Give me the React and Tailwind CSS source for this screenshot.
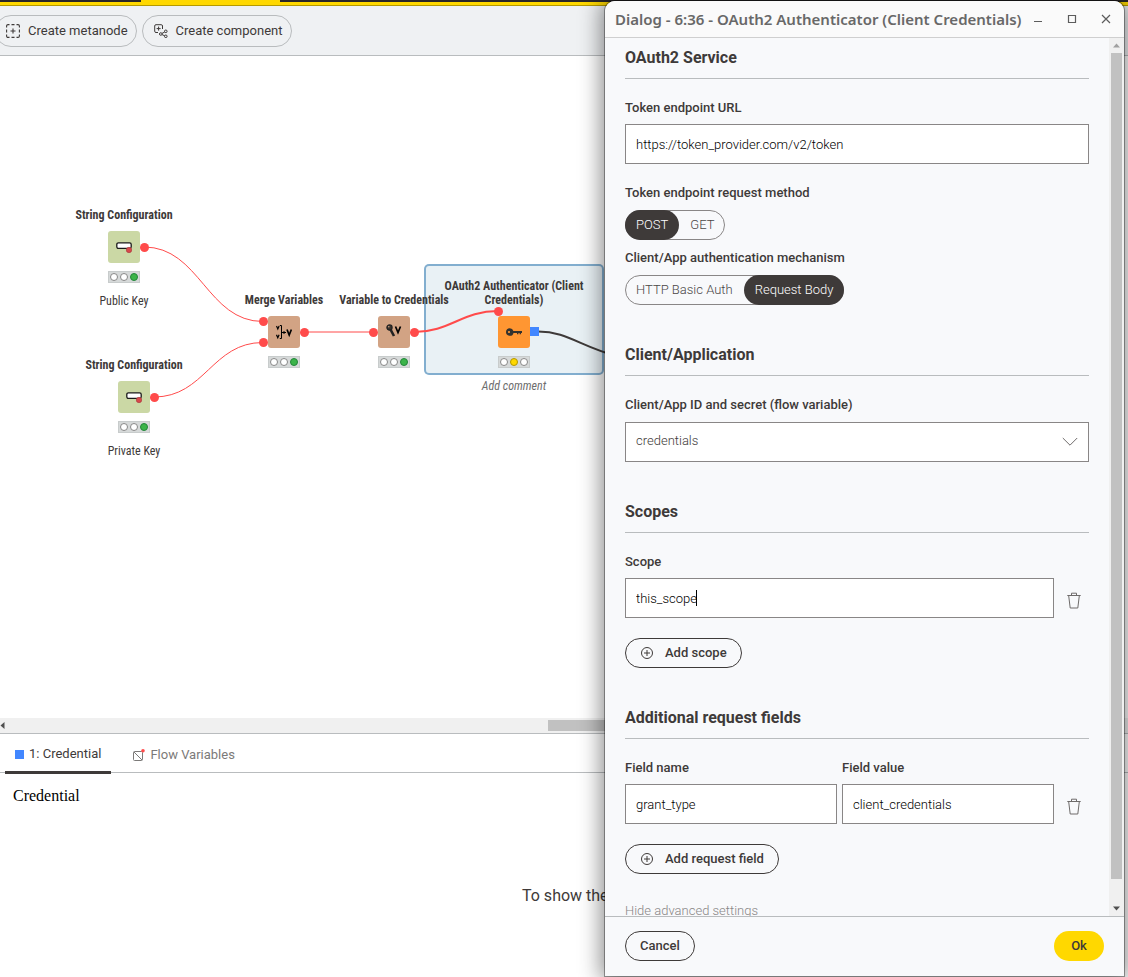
import { useState } from "react";

const NODES = [
  { id: "public", title: "String Configuration", comment: "Public Key", color: "bg-[#cbd8a5]", icon: "config", light: 2, pos: "left-[64px] top-[152px]" },
  { id: "private", title: "String Configuration", comment: "Private Key", color: "bg-[#cbd8a5]", icon: "config", light: 2, pos: "left-[74px] top-[302px]" },
  { id: "merge", title: "Merge Variables", color: "bg-[#d2a384]", icon: "merge", light: 2, pos: "left-[224px] top-[237px]" },
  { id: "tocred", title: "Variable to Credentials", color: "bg-[#d2a384]", icon: "credentials", light: 2, pos: "left-[334px] top-[237px]" },
  { id: "oauth", title: "OAuth2 Authenticator (Client Credentials)", comment: "Add comment", placeholder: true, wide: true, color: "bg-[#ff9632]", icon: "key", light: 1, pos: "left-[439px] top-[223px]" },
];

const FLOW_PORTS = [
  [144, 191], [154, 341], [263, 265], [263, 286], [304, 276], [373, 276], [414, 276], [498, 255],
];

function NodeIcon({ name }) {
  if (name === "config") {
    return (
      <svg width="16" height="16" viewBox="0 0 16 16">
        <rect x="0.8" y="3.8" width="14.4" height="5.6" rx="1.6" fill="#fff" stroke="#1a1a1a" strokeWidth="1.3" />
        <circle cx="13" cy="11" r="2.7" fill="#d8474b" stroke="#a5383b" strokeWidth="0.6" />
      </svg>
    );
  }
  if (name === "merge") {
    return (
      <svg width="16" height="16" viewBox="0 0 16 16" fill="none" stroke="#000">
        <path d="M0.5 2 1.8 5 3.1 2M0.5 10.8 1.8 13.8 3.1 10.8" strokeWidth="1.2" />
        <path d="M3.8 1.5h1.7v13H3.8" strokeWidth="1" />
        <path d="M6 8.5h4M8 7v3" strokeWidth="1" />
        <path d="M11 5.500 13.200 11 15.400 5.500" strokeWidth="1.700" />
      </svg>
    );
  }
  if (name === "credentials") {
    return (
      <svg width="16" height="16" viewBox="0 0 16 16" fill="none" stroke="#222">
        <circle cx="3.5" cy="3.5" r="2.6" fill="#3b332d" strokeWidth="1.2" />
        <circle cx="2.8" cy="2.8" r="0.8" fill="#d2a384" stroke="none" />
        <path d="M4.5 5.5 8 12" strokeWidth="2.6" />
        <path d="M9.500 2.500 12 8.500 14.500 2.500" stroke="#000" strokeWidth="1.700" />
      </svg>
    );
  }
  return (
    <svg width="16" height="16" viewBox="0 0 16 16" fill="#33312e">
      <path fillRule="evenodd" d="M3.8 4.2a3.8 3.8 0 0 1 3.6 2.7H16v2h-1v1.4h-1.4V8.900h-1.200v1.400H11V8.900H7.500A3.800 3.800 0 1 1 3.800 4.200ZM3 6.900a1.100 1.100 0 1 0 0 2.200 1.100 1.100 0 0 0 0-2.200Z" />
    </svg>
  );
}

function TrafficLight({ active }) {
  const on = active === 2 ? "border-[#23853a] bg-[#3cb44a]" : "border-[#b39700] bg-[#ffd800]";
  return (
    <div className="flex h-3 w-8 items-center justify-center gap-0.5 border border-[#c8cccc] bg-[#d6d9d9]">
      {[0, 1, 2].map((i) => (
        <span key={i} className={`size-2 rounded-full border ${i === active ? on : "border-[#888] bg-white"}`} />
      ))}
    </div>
  );
}

function WorkflowNode({ node }) {
  return (
    <div className={`absolute flex flex-col items-center ${node.wide ? "w-[150px]" : "w-[120px]"} ${node.pos}`}>
      <div className={`text-center text-[12px] leading-[14px] font-bold ${node.wide ? "" : "whitespace-nowrap"}`}>{node.title}</div>
      <div className={`mt-[9px] flex size-8 items-center justify-center rounded-[3px] ${node.color}`}>
        <NodeIcon name={node.icon} />
      </div>
      <div className="mt-2">
        <TrafficLight active={node.light} />
      </div>
      {node.comment && (
        <div className={`mt-[10px] text-[12px] leading-[16px] ${node.placeholder ? "text-[#6e6e6e] italic" : ""}`}>{node.comment}</div>
      )}
    </div>
  );
}

function Canvas() {
  return (
    <main className="relative min-h-[400px] flex-1 overflow-hidden bg-white font-['Roboto_Condensed','Roboto',sans-serif]">
      <div className="absolute top-[208px] left-[424px] h-[111px] w-[180px] rounded-[5px] border-2 border-[#3e82b5]/60 bg-[#e9f1f5]" />
      <svg className="absolute top-0 left-0" width="640" height="420" fill="none">
        <g stroke="#ff4b4b" strokeWidth="1">
          <path d="M144 191C200 191 207 265.500 263 265.500" />
          <path d="M154 341C205 341 212 286.500 263 286.500" />
          <path d="M304 276H373" />
          <path d="M414 276C450 276 462 255 498 255" strokeWidth="2" />
        </g>
        <path d="M538 275.500C568 275.500 580 291 620 301" stroke="#3e3a39" strokeWidth="2" />
        {FLOW_PORTS.map(([x, y]) => (
          <circle key={`${x}-${y}`} cx={x + 0.5} cy={y + 0.5} r="4.500" fill="#ff4b4b" />
        ))}
        <rect x="530" y="271" width="9" height="9" fill="#4287ff" />
      </svg>
      {NODES.map((node) => (
        <WorkflowNode key={node.id} node={node} />
      ))}
    </main>
  );
}

function Toolbar() {
  return (
    <header className="flex h-[50px] shrink-0 items-center gap-[5px] border-b border-[#b9bcbe] bg-[#eff1f3]">
      <button className="-ml-[5px] flex h-8 items-center gap-2 rounded-full border border-[#b9bcbe] pr-2 pl-[10px] text-[13px]">
        <svg width="14" height="14" viewBox="0 0 14 14" fill="none" stroke="#3e3a39" strokeWidth="1.100">
          <path d="M0.600 3.500V2a1.400 1.400 0 0 1 1.400-1.400h1.500M10.500.6H12A1.400 1.400 0 0 1 13.400 2v1.500M13.400 10.500V12a1.400 1.400 0 0 1-1.400 1.400h-1.500M3.500 13.400H2A1.400 1.400 0 0 1 .6 12v-1.500M5.500.6h3M5.500 13.400h3M.6 5.500v3M13.400 5.500v3M7 4.500v5M4.500 7h5" />
        </svg>
        Create metanode
      </button>
      <button className="flex h-8 items-center gap-2 rounded-full border border-[#b9bcbe] pr-[9px] pl-[11px] text-[13px]">
        <svg width="14" height="14" viewBox="0 0 14 14" fill="none" stroke="#3e3a39" strokeWidth="1">
          <path d="M4 8.500H2A1.300 1.300 0 0 1 .7 7.200V2A1.300 1.300 0 0 1 2 .7h5.200A1.300 1.300 0 0 1 8.500 2v3M4.600 2.600v4M2.600 4.600h4" />
          <circle cx="6.800" cy="10" r="1.300" />
          <circle cx="11.800" cy="7.300" r="1.300" />
          <circle cx="11.800" cy="12.300" r="1.300" />
          <path d="M8 9.400 10.700 8M8 10.600 10.700 11.800" />
        </svg>
        Create component
      </button>
    </header>
  );
}

function OutputPanel() {
  return (
    <section className="h-[243px] shrink-0 bg-white">
      <div className="flex h-[39px] border-b border-[#b9bcbe] pl-[5px] text-[13px]">
        <button className="flex h-10 items-center gap-[5px] border-b-3 border-[#3e3a39] px-[10px] pt-[3px]">
          <span className="size-[9px] bg-[#4287ff]" />
          1: Credential
        </button>
        <button className="ml-3 flex h-10 items-center gap-[5px] px-[10px] pt-0.5 text-[#7c7a79]">
          <svg width="12" height="12" viewBox="0 0 12 12" fill="none" stroke="#7c7a79">
            <rect x="0.500" y="2.500" width="9" height="9" rx="1" />
            <path d="M1 3 9 11" />
            <circle cx="10" cy="1.800" r="1.800" fill="#ff4b4b" stroke="none" />
          </svg>
          Flow Variables
        </button>
      </div>
      <p className="mt-[13px] ml-[13px] font-['Liberation_Serif',serif] text-[16px] leading-5 text-black">Credential</p>
      <p className="mt-20 ml-[522px] text-[16px] leading-5 whitespace-nowrap">To show the node output, please execute the node.</p>
    </section>
  );
}

function SectionTitle({ children }) {
  return <h2 className="mb-[18px] border-b border-[#b9bcbe] pb-[9px] text-[16px] leading-[22px] font-bold">{children}</h2>;
}

function TextField({ id, label, value, caret }) {
  return (
    <div className="min-w-0 flex-1">
      <label htmlFor={id} className="mb-[5px] block leading-[22px] font-medium">{label}</label>
      <div className="relative">
        <input id={id} defaultValue={value} className="h-10 w-full border border-[#898686] bg-white px-[10px] font-light text-black outline-none" />
        {caret && <span className="absolute top-3 left-[71px] h-4 w-px bg-black" />}
      </div>
    </div>
  );
}

function ValueSwitch({ name, label, options, initial }) {
  const [selected, setSelected] = useState(initial);
  return (
    <fieldset>
      <legend className="mb-[6px] block leading-[22px] font-medium">{label}</legend>
      <div className="flex h-[30px] w-fit rounded-full border border-[#898686]">
        {options.map((option) => (
          <label
            key={option}
            className={`-my-px flex items-center rounded-full px-[11px] font-light first:-ml-px last:-mr-px ${
              selected === option ? "bg-[#3e3a39] text-white" : "text-[#4a4746]"
            }`}
          >
            <input type="radio" name={name} className="sr-only" checked={selected === option} onChange={() => setSelected(option)} />
            {option}
          </label>
        ))}
      </div>
    </fieldset>
  );
}

function TrashButton({ label }) {
  return (
    <button aria-label={label} className="flex h-9 w-[35px] items-center justify-center pl-[5px]">
      <svg width="14" height="17" viewBox="0 0 14 17" fill="none" stroke="#6e6b6a">
        <path d="M0.300 3.500h13.400M4.500 3V1.200h5V3M1.700 3.800 3.200 16h7.600L12.300 3.800" />
      </svg>
    </button>
  );
}

function AddButton({ children }) {
  return (
    <button className="mt-5 mb-[39px] flex h-[30px] items-center gap-3 rounded-full border border-[#3e3a39] pr-[14px] pl-[15px] font-medium">
      <svg width="12" height="12" viewBox="0 0 12 12" fill="none" stroke="#3e3a39">
        <circle cx="6" cy="6" r="5.500" />
        <path d="M6 3v6M3 6h6" />
      </svg>
      {children}
    </button>
  );
}

function DialogScrollbar() {
  return (
    <div className="flex w-[15px] shrink-0 flex-col items-center bg-[#f0f0f0]">
      <svg className="my-[5px] shrink-0" width="7" height="5" viewBox="0 0 7 5">
        <path d="M0 4.500 3.500 0.500 7 4.500Z" fill="#a0a0a0" />
      </svg>
      <div className="mb-[27px] w-[11px] flex-1 bg-[#c1c1c1]" />
      <svg className="mb-[5px] shrink-0" width="7" height="5" viewBox="0 0 7 5">
        <path d="M0 .5 3.500 4.500 7 .5Z" fill="#505050" />
      </svg>
    </div>
  );
}

function AuthenticatorDialog() {
  return (
    <div
      role="dialog"
      aria-label="OAuth2 Authenticator"
      className="absolute inset-y-px right-1 flex w-[519px] flex-col overflow-hidden rounded-t-[10px] bg-[#f8f9fb] text-[13px] shadow-[0_0_0_1px_rgba(0,0,0,0.35),0_0_22px_4px_rgba(0,0,0,0.45)]"
    >
      <div className="flex h-[37px] shrink-0 items-center border-b border-[#cfcfcf] bg-[#fafafa] pr-3 pl-[10px] text-[#686868]">
        <h1 className="flex-1 font-['Noto_Sans',sans-serif] text-[15px] font-semibold whitespace-nowrap">
          Dialog - 6:36 - OAuth2 Authenticator (Client Credentials)
        </h1>
        <div className="flex gap-[22px]">
          {[
            ["Minimize", "M2 8.500h8"],
            ["Maximize", "M2.500 2.500h7v7h-7z"],
            ["Close", "M2 2 10 10M10 2 2 10"],
          ].map(([name, d]) => (
            <button key={name} aria-label={name}>
              <svg width="12" height="12" viewBox="0 0 12 12" fill="none" stroke="#5c5c5c" strokeWidth="1.200">
                <path d={d} />
              </svg>
            </button>
          ))}
        </div>
      </div>

      <div className="flex min-h-0 flex-1">
        <div className="min-w-0 flex-1 overflow-hidden px-5 pt-[9px]">
          <SectionTitle>OAuth2 Service</SectionTitle>
          <TextField id="token-url" label="Token endpoint URL" value="https://token_provider.com/v2/token" />
          <div className="mt-[18px] mb-[39px] flex flex-col gap-[7px]">
            <ValueSwitch name="method" label="Token endpoint request method" options={["POST", "GET"]} initial="POST" />
            <ValueSwitch name="mechanism" label="Client/App authentication mechanism" options={["HTTP Basic Auth", "Request Body"]} initial="Request Body" />
          </div>

          <SectionTitle>Client/Application</SectionTitle>
          <label htmlFor="credentials" className="mb-[6px] block leading-[22px] font-medium">Client/App ID and secret (flow variable)</label>
          <div className="relative mb-[39px]">
            <select id="credentials" className="h-10 w-full appearance-none border border-[#898686] bg-white px-[10px] pb-0.5 font-light outline-none">
              <option>credentials</option>
            </select>
            <svg className="pointer-events-none absolute top-[15px] right-[11px]" width="16" height="10" viewBox="0 0 16 10" fill="none" stroke="#6e6b6a">
              <path d="M0.800 1 8 8.200 15.200 1" />
            </svg>
          </div>

          <SectionTitle>Scopes</SectionTitle>
          <div className="flex items-end">
            <TextField id="scope" label="Scope" value="this_scope" caret />
            <TrashButton label="Delete scope" />
          </div>
          <AddButton>Add scope</AddButton>

          <SectionTitle>Additional request fields</SectionTitle>
          <div className="flex items-end">
            <div className="flex flex-1 gap-[5px]">
              <TextField id="field-name" label="Field name" value="grant_type" />
              <TextField id="field-value" label="Field value" value="client_credentials" />
            </div>
            <TrashButton label="Delete request field" />
          </div>
          <AddButton>Add request field</AddButton>
          <button className="-mt-3 block leading-5 font-light text-[#898686]">Hide advanced settings</button>
        </div>
        <DialogScrollbar />
      </div>

      <div className="flex h-[60px] shrink-0 items-center justify-between border-t border-[#b9bcbe] px-5 pb-0.5">
        <button className="h-[30px] rounded-full border border-[#3e3a39] px-[14px] font-medium">Cancel</button>
        <button className="h-[30px] w-[50px] rounded-full bg-[#ffd800] font-medium">Ok</button>
      </div>
    </div>
  );
}

export default function App() {
  return (
    <div className="relative flex h-screen min-h-[700px] flex-col overflow-hidden font-['Roboto',sans-serif] text-[#3e3a39]">
      <div className="flex h-[6px] shrink-0 flex-col border-b border-[#b59a00] bg-[#ffd800]">
        <div className="flex h-0.5 gap-[139px]">
          <div className="w-[141px] bg-[#2a2727]" />
          <div className="flex-1 bg-[#2a2727]" />
        </div>
      </div>
      <Toolbar />
      <Canvas />
      <div className="flex h-4 shrink-0 items-center border-b border-[#b9bcbe] bg-[#f0f0f0]">
        <svg width="5" height="7" viewBox="0 0 5 7">
          <path d="M4.500 0 .5 3.500 4.500 7Z" fill="#505050" />
        </svg>
        <div className="ml-[543px] h-[11px] w-[400px] bg-[#c1c1c1]" />
      </div>
      <OutputPanel />
      <AuthenticatorDialog />
    </div>
  );
}
